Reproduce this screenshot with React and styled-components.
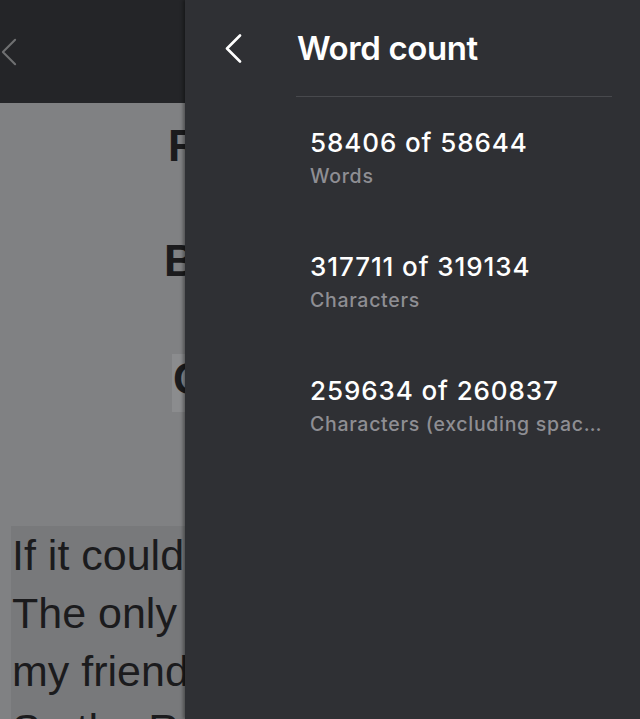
import React from "react";
import styled, { createGlobalStyle } from "styled-components";

const GlobalStyle = createGlobalStyle`
  html, body {
    margin: 0;
    padding: 0;
    background: #808183;
  }
  * {
    box-sizing: border-box;
  }
`;

const Screen = styled.div`
  display: flex;
  width: 640px;
  height: 719px;
  overflow: hidden;
  font-family: "Liberation Sans", Arial, sans-serif;
`;

// the dimmed document that peeks out to the left of the drawer
const Doc = styled.div`
  width: 185px;
  flex: none;
  display: flex;
  flex-direction: column;
  overflow: hidden;
`;

const TopBar = styled.div`
  height: 103px;
  flex: none;
  display: flex;
  align-items: center;
  padding-left: 1px;
  background: #242528;
  color: #6f7072;
`;

const Page = styled.div`
  flex: 1;
  display: flex;
  flex-direction: column;
  padding-top: 21px;
  background: #808183;
  color: #1b1b1d;
`;

const Heading = styled.div`
  font-size: 44px;
  line-height: 44px;
  font-weight: 700;
  white-space: nowrap;
  padding-left: ${(p) => p.$indent}px;
  margin-top: ${(p) => p.$gap || 0}px;
`;

const Mark = styled.span`
  display: inline-block;
  padding: 3px 1px 11px;
  background: #8b8c8e;
`;

const Body = styled.div`
  margin-top: 114px;
  margin-left: 11px;
  padding-left: 1px;
  background: #78797b;
  font-size: 43px;
  line-height: 58px;
  white-space: nowrap;
  flex: 1;
`;

const Drawer = styled.aside`
  position: relative;
  z-index: 1;
  flex: 1;
  min-width: 0;
  display: flex;
  flex-direction: column;
  background: #2f3034;
  box-shadow: -2px 0 3px rgba(0, 0, 0, 0.35);
  font-family: Inter, "Noto Sans", sans-serif;
  color: #ffffff;
`;

const Header = styled.header`
  height: 96px;
  display: flex;
  align-items: center;
  padding-left: 40px;
`;

const BackButton = styled.button`
  width: 72px;
  height: 40px;
  padding: 0;
  border: 0;
  background: none;
  display: flex;
  align-items: center;
  color: #ffffff;
  cursor: pointer;
`;

const Title = styled.h1`
  margin: 0;
  font-size: 33px;
  font-weight: 600;
  letter-spacing: -0.4px;
`;

const Divider = styled.hr`
  margin: 0 28px 0 111px;
  border: 0;
  height: 1px;
  background: #48494d;
`;

const List = styled.div`
  display: flex;
  flex-direction: column;
  gap: 63px;
  padding: 30px 36px 0 125px;
`;

const Item = styled.div`
  display: flex;
  flex-direction: column;
  gap: 5px;
  min-width: 0;
`;

const Count = styled.div`
  font-size: 26px;
  line-height: 32px;
  font-weight: 500;
  letter-spacing: 0.9px;
`;

const Label = styled.div`
  font-size: 19.5px;
  line-height: 24px;
  font-weight: 500;
  color: #8e8e93;
  letter-spacing: 0.7px;
  white-space: nowrap;
  overflow: hidden;
  text-overflow: ellipsis;
`;

const Chevron = ({ width = 17, height = 29, stroke = 2.6 }) => (
  <svg width={width} height={height} viewBox="0 0 17 29" fill="none">
    <polyline
      points="15,1.5 2,14.5 15,27.5"
      stroke="currentColor"
      strokeWidth={stroke}
      strokeLinecap="round"
      strokeLinejoin="round"
    />
  </svg>
);

const counts = [
  { value: "58406 of 58644", label: "Words" },
  { value: "317711 of 319134", label: "Characters" },
  { value: "259634 of 260837", label: "Characters (excluding spaces)" },
];

const App = () => {
  return (
    <Screen>
      <GlobalStyle />
      <Doc>
        <TopBar>
          <Chevron width={16} height={28} stroke={2.2} />
        </TopBar>
        <Page>
          <Heading $indent={168}>R</Heading>
          <Heading $indent={164} $gap={71}>
            B
          </Heading>
          <Heading $indent={172} $gap={71}>
            <Mark>C</Mark>
          </Heading>
          <Body>
            If it could
            <br />
            The only
            <br />
            my friend
            <br />
            So the R
          </Body>
        </Page>
      </Doc>

      <Drawer>
        <Header>
          <BackButton aria-label="Back">
            <Chevron />
          </BackButton>
          <Title>Word count</Title>
        </Header>
        <Divider />
        <List>
          {counts.map((c) => (
            <Item key={c.label}>
              <Count>{c.value}</Count>
              <Label>{c.label}</Label>
            </Item>
          ))}
        </List>
      </Drawer>
    </Screen>
  );
};

export default App;
